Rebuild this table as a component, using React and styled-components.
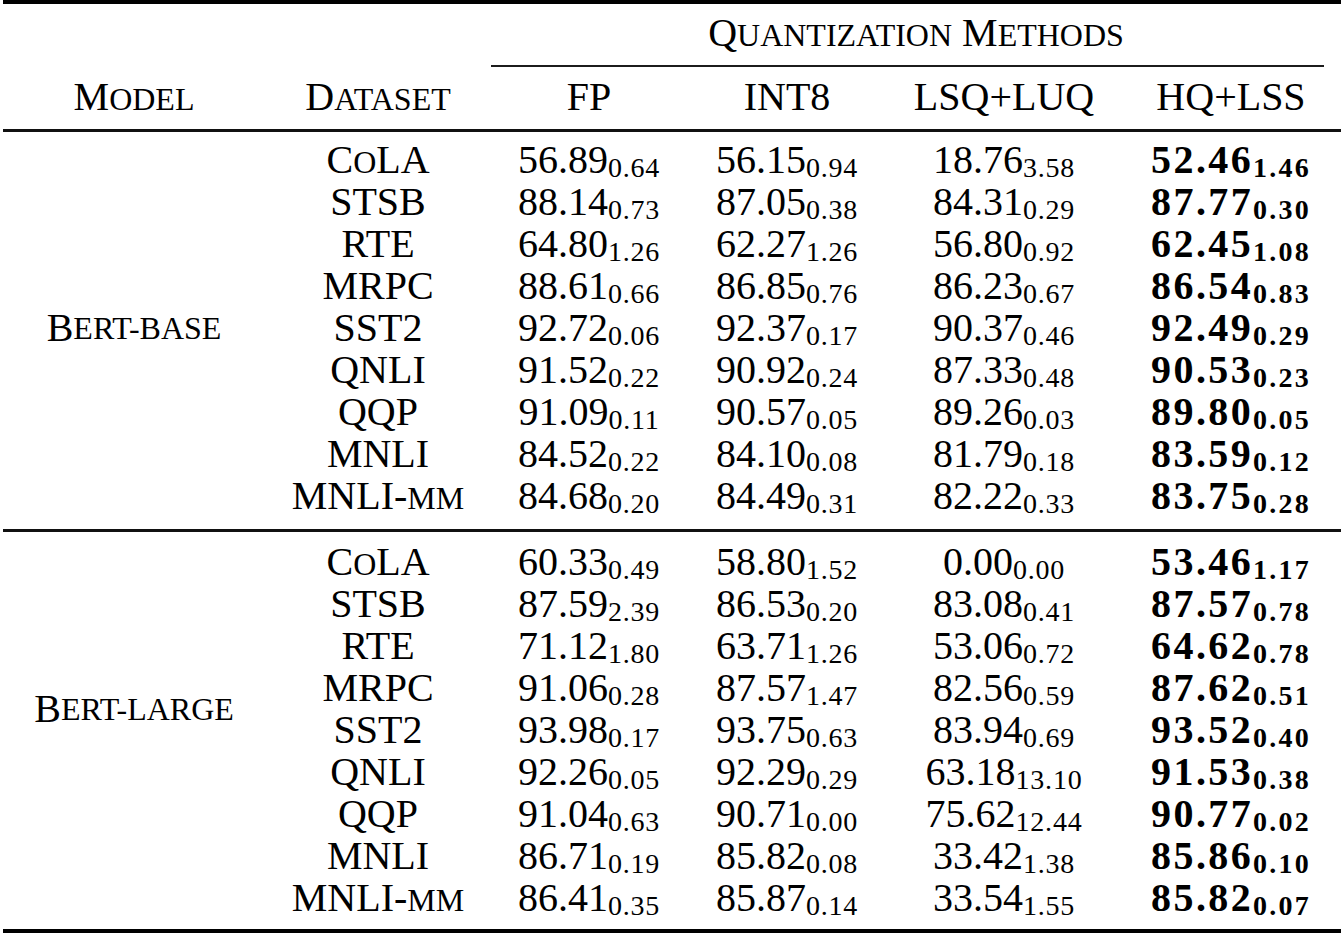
import React from 'react';
import styled, { createGlobalStyle } from 'styled-components';

const Global = createGlobalStyle`
  html, body { margin: 0; padding: 0; background: #fff; }
  body {
    font-family: "Liberation Serif", "Times New Roman", serif;
    color: #000;
  }
`;

const COLS = '262px 226px 196px 200px 234px 220px';

const Table = styled.div`
  margin-left: 3px;
  width: 1338px;
  border-top: 4px solid #000;
  border-bottom: 4px solid #000;
  font-size: 40px;
  line-height: 42px;
`;

const GroupHeader = styled.div`
  display: grid;
  grid-template-columns: 488px 1fr;
  margin-top: 8px;
  height: 42px;
`;

const GroupTitle = styled.div`
  grid-column: 2;
  text-align: center;
  white-space: nowrap;
`;

const CMidRule = styled.div`
  margin: 11px 17px 0 488px;
  height: 2px;
  background: #1c1c1c;
`;

const ColHeader = styled.div`
  display: grid;
  grid-template-columns: ${COLS};
  margin-top: 9px;
  height: 42px;
`;

const MidRule = styled.div`
  margin-top: ${(p) => p.$gap}px;
  height: 3px;
  background: #111;
`;

const Block = styled.div`
  display: grid;
  grid-template-columns: ${COLS};
  grid-template-rows: repeat(9, 42px);
  margin-top: ${(p) => p.$top}px;
  margin-bottom: ${(p) => p.$bottom}px;
`;

const Cell = styled.div`
  text-align: center;
  white-space: nowrap;
`;

const ModelCell = styled(Cell)`
  grid-column: 1;
  grid-row: 1 / span ${(p) => p.$span};
  display: flex;
  align-items: center;
  justify-content: center;
`;

const DatasetCell = styled(Cell)`
  grid-column: 2;
`;

const Small = styled.span`
  font-size: 0.8em;
  text-transform: uppercase;
`;

const Main = styled.span`
  font-weight: ${(p) => (p.$bold ? 700 : 400)};
  letter-spacing: ${(p) => (p.$bold ? '2.4px' : '0')};
`;

const Sub = styled.span`
  font-size: 28px;
  vertical-align: -4px;
  font-weight: ${(p) => (p.$bold ? 700 : 400)};
  letter-spacing: ${(p) => (p.$bold ? '2.2px' : '0.8px')};
`;

const datasetLabel = (name) => {
  if (name === 'CoLA') return (<>C<Small>o</Small>LA</>);
  if (name === 'MNLI-mm') return (<>MNLI-<Small>mm</Small></>);
  return name;
};

const base = [
  ['CoLA', ['56.89', '0.64'], ['56.15', '0.94'], ['18.76', '3.58'], ['52.46', '1.46']],
  ['STSB', ['88.14', '0.73'], ['87.05', '0.38'], ['84.31', '0.29'], ['87.77', '0.30']],
  ['RTE', ['64.80', '1.26'], ['62.27', '1.26'], ['56.80', '0.92'], ['62.45', '1.08']],
  ['MRPC', ['88.61', '0.66'], ['86.85', '0.76'], ['86.23', '0.67'], ['86.54', '0.83']],
  ['SST2', ['92.72', '0.06'], ['92.37', '0.17'], ['90.37', '0.46'], ['92.49', '0.29']],
  ['QNLI', ['91.52', '0.22'], ['90.92', '0.24'], ['87.33', '0.48'], ['90.53', '0.23']],
  ['QQP', ['91.09', '0.11'], ['90.57', '0.05'], ['89.26', '0.03'], ['89.80', '0.05']],
  ['MNLI', ['84.52', '0.22'], ['84.10', '0.08'], ['81.79', '0.18'], ['83.59', '0.12']],
  ['MNLI-mm', ['84.68', '0.20'], ['84.49', '0.31'], ['82.22', '0.33'], ['83.75', '0.28']],
];

const large = [
  ['CoLA', ['60.33', '0.49'], ['58.80', '1.52'], ['0.00', '0.00'], ['53.46', '1.17']],
  ['STSB', ['87.59', '2.39'], ['86.53', '0.20'], ['83.08', '0.41'], ['87.57', '0.78']],
  ['RTE', ['71.12', '1.80'], ['63.71', '1.26'], ['53.06', '0.72'], ['64.62', '0.78']],
  ['MRPC', ['91.06', '0.28'], ['87.57', '1.47'], ['82.56', '0.59'], ['87.62', '0.51']],
  ['SST2', ['93.98', '0.17'], ['93.75', '0.63'], ['83.94', '0.69'], ['93.52', '0.40']],
  ['QNLI', ['92.26', '0.05'], ['92.29', '0.29'], ['63.18', '13.10'], ['91.53', '0.38']],
  ['QQP', ['91.04', '0.63'], ['90.71', '0.00'], ['75.62', '12.44'], ['90.77', '0.02']],
  ['MNLI', ['86.71', '0.19'], ['85.82', '0.08'], ['33.42', '1.38'], ['85.86', '0.10']],
  ['MNLI-mm', ['86.41', '0.35'], ['85.87', '0.14'], ['33.54', '1.55'], ['85.82', '0.07']],
];

const ModelBlock = ({ label, span, rows, top, bottom }) => (
  <Block $top={top} $bottom={bottom}>
    <ModelCell $span={span}>{label}</ModelCell>
    {rows.map(([name, ...vals]) => (
      <React.Fragment key={name}>
        <DatasetCell>{datasetLabel(name)}</DatasetCell>
        {vals.map(([m, s], i) => {
          const bold = i === 3;
          return (
            <Cell key={i}>
              <Main $bold={bold}>{m}</Main>
              <Sub $bold={bold}>{s}</Sub>
            </Cell>
          );
        })}
      </React.Fragment>
    ))}
  </Block>
);

export default function App() {
  return (
    <>
      <Global />
      <Table>
        <GroupHeader>
          <GroupTitle>
            Q<Small>uantization</Small> M<Small>ethods</Small>
          </GroupTitle>
        </GroupHeader>
        <CMidRule />
        <ColHeader>
          <Cell>M<Small>odel</Small></Cell>
          <Cell>D<Small>ataset</Small></Cell>
          <Cell>FP</Cell>
          <Cell>INT8</Cell>
          <Cell>LSQ+LUQ</Cell>
          <Cell>HQ+LSS</Cell>
        </ColHeader>
        <MidRule $gap={11} />
        <ModelBlock
          label={<>B<Small>ert-base</Small></>}
          span={9}
          rows={base}
          top={7}
          bottom={12}
        />
        <MidRule $gap={0} />
        <ModelBlock
          label={<>B<Small>ert-large</Small></>}
          span={8}
          rows={large}
          top={9}
          bottom={10}
        />
      </Table>
    </>
  );
}
